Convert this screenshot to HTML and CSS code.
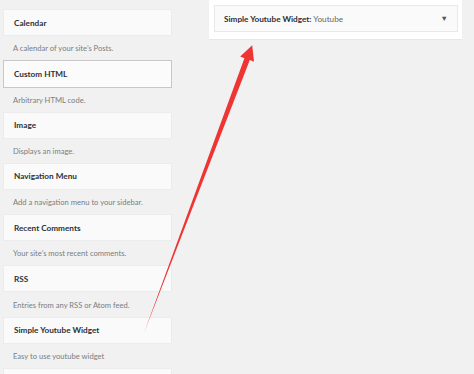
FILE: index.html
```html
<!DOCTYPE html>
<html lang="en">
<head>
    <meta charset="UTF-8">
    <meta name="viewport" content="width=device-width, initial-scale=1.0">
    <title>Available Widgets</title>
    <link rel="stylesheet" href="styles.css">
</head>
<body>
    <div class="page">
        <div class="widget-list">
            <div class="widget">
                <div class="widget-title">Calendar</div>
                <div class="widget-desc">A calendar of your site’s Posts.</div>
            </div>
            <div class="widget active">
                <div class="widget-title">Custom HTML</div>
                <div class="widget-desc">Arbitrary HTML code.</div>
            </div>
            <div class="widget">
                <div class="widget-title">Image</div>
                <div class="widget-desc">Displays an image.</div>
            </div>
            <div class="widget">
                <div class="widget-title">Navigation Menu</div>
                <div class="widget-desc">Add a navigation menu to your sidebar.</div>
            </div>
            <div class="widget">
                <div class="widget-title">Recent Comments</div>
                <div class="widget-desc">Your site’s most recent comments.</div>
            </div>
            <div class="widget">
                <div class="widget-title">RSS</div>
                <div class="widget-desc">Entries from any RSS or Atom feed.</div>
            </div>
            <div class="widget">
                <div class="widget-title">Simple Youtube Widget</div>
                <div class="widget-desc">Easy to use youtube widget</div>
            </div>
            <div class="widget">
                <div class="widget-title"></div>
            </div>
        </div>

        <div class="sidebar-area">
            <div class="sidebar-widget">
                <span class="sidebar-title"><strong>Simple Youtube Widget:</strong> Youtube</span>
                <span class="toggle">&#9660;</span>
            </div>
        </div>
    </div>

    <!-- annotation arrow drawn over the screenshot -->
    <svg class="arrow" width="474" height="374" viewBox="0 0 474 374">
        <polygon points="144,333 244.4,58.3 240.2,56.4 252.2,45.2 254,61.8 249.8,60.1" fill="#ef3434"/>
    </svg>
</body>
</html>
```

FILE: styles.css
```css
body {
    margin: 0;
    background: #f1f1f1;
    font-family: Lato, "Open Sans", sans-serif;
    color: #2c3136;
}

.page {
    display: flex;
    align-items: flex-start;
    height: 100vh;
    overflow: hidden;
}

.widget-list {
    width: 169px;
    margin-left: 3px;
    padding-top: 9px;
}

.widget-title {
    box-sizing: border-box;
    height: 27px;
    padding: 0 10px;
    display: flex;
    align-items: center;
    background: #fafafa;
    border: 1px solid #ececec;
    font-size: 8.2px;
    font-weight: 700;
    white-space: nowrap;
}

.widget.active .widget-title {
    height: 28px;
    border-color: #c8c8c8;
    background: #fbfbfb;
}

.widget-desc {
    height: 24.3px;
    padding: 0 10px;
    display: flex;
    align-items: center;
    font-size: 7.6px;
    color: #797d82;
    white-space: nowrap;
}

.widget.active .widget-desc {
    height: 23.3px;
}

.sidebar-area {
    width: 253px;
    margin-left: 37px;
    padding: 5px 4px 7px 5px;
    box-sizing: border-box;
    background: #fff;
    box-shadow: 0 1px 1px rgba(0, 0, 0, 0.04);
}

.sidebar-widget {
    box-sizing: border-box;
    height: 27px;
    padding: 0 9px 0 9px;
    display: flex;
    align-items: center;
    justify-content: space-between;
    background: #fafafa;
    border: 1px solid #e8e8e8;
    font-size: 8.2px;
    white-space: nowrap;
}

.sidebar-title {
    color: #666;
}

.sidebar-title strong {
    font-weight: 700;
    color: #2c3136;
}

.toggle {
    font-size: 7.5px;
    color: #555;
}

.arrow {
    position: absolute;
    top: 0;
    left: 0;
    pointer-events: none;
}
```
